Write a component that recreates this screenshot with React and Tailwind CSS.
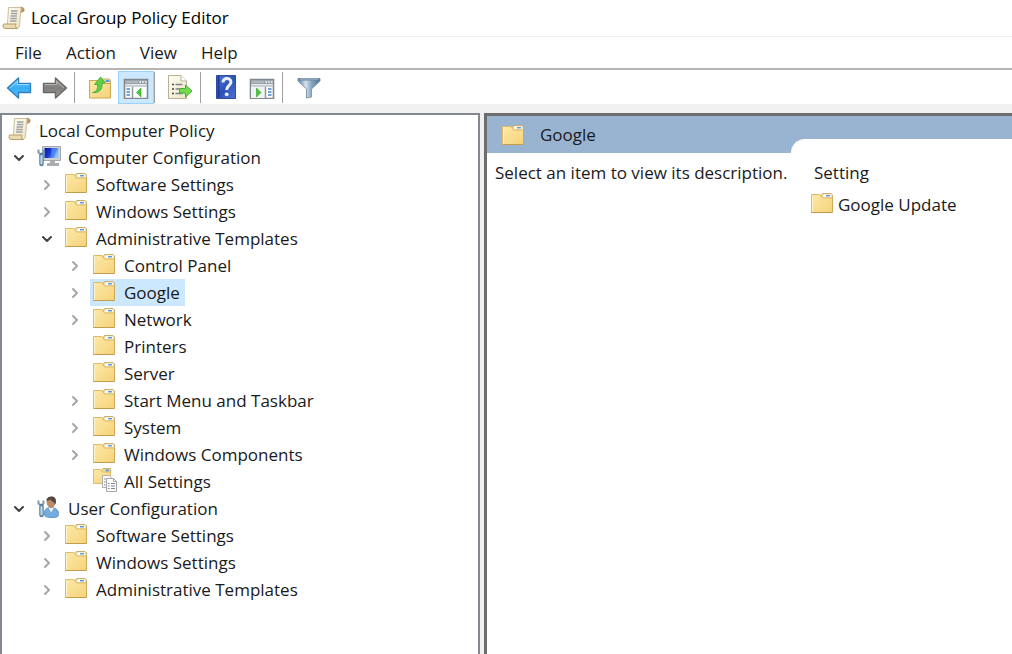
import { useState } from "react";
import { ChevronDown, ChevronRight } from "lucide-react";

const TREE = [
  {
    id: "computer",
    name: "Computer Configuration",
    icon: "computer",
    children: [
      { id: "c-software", name: "Software Settings", children: [] },
      { id: "c-windows", name: "Windows Settings", children: [] },
      {
        id: "c-admin",
        name: "Administrative Templates",
        children: [
          { id: "control-panel", name: "Control Panel", children: [] },
          { id: "google", name: "Google", children: [] },
          { id: "network", name: "Network", children: [] },
          { id: "printers", name: "Printers" },
          { id: "server", name: "Server" },
          { id: "start-menu", name: "Start Menu and Taskbar", children: [] },
          { id: "system", name: "System", children: [] },
          { id: "components", name: "Windows Components", children: [] },
          { id: "all", name: "All Settings", icon: "all" },
        ],
      },
    ],
  },
  {
    id: "user",
    name: "User Configuration",
    icon: "user",
    children: [
      { id: "u-software", name: "Software Settings", children: [] },
      { id: "u-windows", name: "Windows Settings", children: [] },
      { id: "u-admin", name: "Administrative Templates", children: [] },
    ],
  },
];

// gradients shared by all the icons
function IconDefs() {
  return (
    <svg width="0" height="0" className="absolute" aria-hidden="true">
      <defs>
        <linearGradient id="g-folder" x1="0" y1="0" x2="1" y2="1">
          <stop offset="0" stopColor="#fde9a8" />
          <stop offset="1" stopColor="#f5d27a" />
        </linearGradient>
        <linearGradient id="g-blue" x1="0" y1="0" x2="0" y2="1">
          <stop offset="0" stopColor="#7fd0fb" />
          <stop offset="0.5" stopColor="#35adf3" />
          <stop offset="1" stopColor="#5cc5fa" />
        </linearGradient>
        <linearGradient id="g-gray" x1="0" y1="0" x2="0" y2="1">
          <stop offset="0" stopColor="#aaa6a4" />
          <stop offset="0.5" stopColor="#807c7a" />
          <stop offset="1" stopColor="#a19d9b" />
        </linearGradient>
        <linearGradient id="g-help" x1="0" y1="0" x2="1" y2="1">
          <stop offset="0" stopColor="#5479d4" />
          <stop offset="0.5" stopColor="#2c52ba" />
          <stop offset="1" stopColor="#4e74d2" />
        </linearGradient>
        <linearGradient id="g-funnel" x1="0" y1="0" x2="1" y2="0">
          <stop offset="0" stopColor="#5d7f9f" />
          <stop offset="0.35" stopColor="#d3e2ee" />
          <stop offset="0.6" stopColor="#8ba8c1" />
          <stop offset="1" stopColor="#4c6f90" />
        </linearGradient>
        <linearGradient id="g-screen" x1="0" y1="0" x2="1" y2="0.4">
          <stop offset="0" stopColor="#0716a8" />
          <stop offset="0.5" stopColor="#1539d3" />
          <stop offset="1" stopColor="#8fc4f8" />
        </linearGradient>
        <linearGradient id="g-paper" x1="0" y1="0" x2="1" y2="1">
          <stop offset="0" stopColor="#fffef3" />
          <stop offset="1" stopColor="#ece3c3" />
        </linearGradient>
      </defs>
    </svg>
  );
}

function FolderIcon() {
  return (
    <svg width="22" height="22" viewBox="0 0 22 22" aria-hidden="true">
      <path d="M10 4 11.500 1.500h8.500l1.500 1.500v5H10z" fill="#f3dfa8" stroke="#c9ad6c" />
      <path d="M12.500 2.500h7.500v2.500h-7.500z" fill="#fff" />
      <path d="M15 3h4v1.500h-4z" fill="#5f9bdc" />
      <path d="M.5 2.500h8.500l2.500 3.500h10v14.500H.5z" fill="url(#g-folder)" stroke="#dcbb69" />
      <path d="M1.500 3.500v16" stroke="#fff3c8" />
      <path d="M.5 20.500h21" stroke="#c39c4c" />
      <path d="M21.500 6v14" stroke="#cfa957" />
    </svg>
  );
}

function ScrollIcon() {
  return (
    <svg width="24" height="24" viewBox="0 0 24 24" aria-hidden="true">
      <path d="M17.500 1.500c3.500-1 5 1 4.500 3.500L19.500 6.500z" fill="#b99a62" stroke="#9c8555" strokeWidth=".7" />
      <path
        d="M6.500 1.500H18c1.500 0 1 2 .8 3L17.500 19c-.2 2-1 3.500-3 3.500H4L5.500 18z"
        fill="url(#g-paper)"
        stroke="#cdbf98"
      />
      <path
        d="M1.500 18h12.500c-1 2 0 4.500 1.500 4.500H3c-2 0-2.500-2.500-1.500-4.500z"
        fill="#eadcb2"
        stroke="#b89f6b"
      />
      <path d="M9 5h6.500M8.800 7.500h6.500M8.500 10H15M8.200 12.500h6.600M8 15h6.500" stroke="#9fa2a6" strokeWidth="1.300" />
    </svg>
  );
}

function Wrench() {
  return (
    <>
      <path d="M1.500 4.500v3L4 9.500l2.500-2v-3" fill="none" stroke="#7d99b0" strokeWidth="2" />
      <path d="M4.500 10v9" stroke="#587e9b" strokeWidth="4.500" strokeLinecap="round" />
      <path d="M4.500 11v7.500" stroke="#b6daf0" strokeWidth="2.200" strokeLinecap="round" />
    </>
  );
}

function ComputerIcon() {
  return (
    <svg width="24" height="22" viewBox="0 0 24 22" aria-hidden="true">
      <path d="M13 15h5v3h4v3H10v-3h3z" fill="#a9adb0" />
      <path d="M5.500 1.500h18v14h-18z" fill="#cfd1d3" stroke="#a3a8ad" />
      <path d="M7.500 3h14v10h-14z" fill="url(#g-screen)" />
      <path d="M14 3h5l-2 10h-2z" fill="#4f8bee" opacity=".7" />
      <Wrench />
    </svg>
  );
}

function UserIcon() {
  return (
    <svg width="24" height="22" viewBox="0 0 24 22" aria-hidden="true">
      <path d="M7.500 19c-1-5 2-7.500 6-7.500s8 2 8 6-2 4-7 4-6.500-1-7-2.500z" fill="#75abdf" stroke="#5c96cd" />
      <path d="M11.500 11.500 14 16.500l3-5z" fill="#eef6fc" />
      <path d="M9.500 5c0-3 2-4 4.500-4s5 2 4.500 5.500-2 5.500-4 5.500-5-2-5-7z" fill="#bc8a68" />
      <path d="M9.500 4.500C9.500 2 12 .5 14.500.5 18 .5 20 3 18.500 8.500L16.500 6c-1.500-.5-2.500-1.500-3-2.500-1 1-2.500 1.300-4 1z" fill="#54473f" />
      <Wrench />
    </svg>
  );
}

function AllSettingsIcon() {
  return (
    <svg width="24" height="24" viewBox="0 0 24 24" aria-hidden="true">
      <path d="M8.500 3 10 .5h7.500v5h-9z" fill="#f3dc9c" stroke="#c9ad6c" />
      <path d="M12.500 1.500H16V3.500h-3.500z" fill="#5f9bdc" />
      <path d="M.5 1.500h7L9.500 4h8v11.500H.5z" fill="url(#g-folder)" stroke="#dcbb69" />
      <path d="M9.500 7.500h7l2 2v10h-9z" fill="#fafafa" stroke="#b0b0b0" />
      <path d="M13.500 10.500h7l3 3v10h-10z" fill="#fff" stroke="#a5a5a5" />
      <path d="M20.500 10.500v3h3" fill="none" stroke="#a5a5a5" />
      <path d="M11 11h1.500M11 14h1.500M11 17h1.500" stroke="#789" />
      <path d="M15 15.500h1.500M15 18h1.500M15 20.500h1.500M18 15.500h4M18 18h4M18 20.500h4" stroke="#778594" />
    </svg>
  );
}

function ArrowIcon({ forward }) {
  return forward ? (
    <svg width="26" height="24" viewBox="0 -1 26 24" aria-hidden="true">
      <path
        d="M24.500 12 13.500 2v5.500h-12v9h12V22z"
        fill="url(#g-gray)"
        stroke="#696664"
        strokeWidth="1.400"
        strokeLinejoin="round"
      />
      <path d="M2.500 8.500h12V5l7.500 7" fill="none" stroke="#bebbb9" strokeWidth=".8" />
    </svg>
  ) : (
    <svg width="26" height="24" viewBox="0 -1 26 24" aria-hidden="true">
      <path
        d="M1.500 12 12.500 2v5.500h12v9h-12V22z"
        fill="url(#g-blue)"
        stroke="#2f7fc0"
        strokeWidth="1.400"
        strokeLinejoin="round"
      />
      <path d="M23.500 8.500h-12V5L4 12" fill="none" stroke="#a9e1ff" strokeWidth=".8" />
    </svg>
  );
}

function UpFolderIcon() {
  return (
    <svg width="24" height="24" viewBox="0 -1 24 24" aria-hidden="true">
      <path d="M12 5.500 13.500 3h8l1 1.500V8H12z" fill="#f3dc9c" stroke="#c9ad6c" />
      <path d="M17.500 4h4v2h-4z" fill="#5f9bdc" />
      <path d="M1.500 4.500H10L12 7.500h10.500v14.500h-21z" fill="url(#g-folder)" stroke="#cba653" />
      <path
        d="M4.500 16.500c4-.5 5.500-3.500 5-8H6.500L12.500 1l4.500 5.500-3 .8c1 6-3 10-9.500 9.200z"
        fill="#5fd044"
        stroke="#46ab35"
        strokeWidth=".9"
        strokeLinejoin="round"
      />
    </svg>
  );
}

function WindowIcon({ flipped }) {
  return (
    <svg width="26" height="24" viewBox="0 -2 26 24" aria-hidden="true">
      <path d="M1.500 2.500h23v19h-23z" fill="#fff" stroke="#808890" strokeWidth="1.600" />
      <path d="M2 3h22v4H2z" fill="#9ba3ab" />
      <path d="M3 5h12" stroke="#c6ccd2" />
      <path d="M16.500 5H18M19.200 5h1.500M22 5h1.500" stroke="#fff" strokeWidth="1.500" />
      <path d="M2 7.500h22V10H2z" fill="#c9ced3" />
      {flipped ? (
        <>
          <path d="M2 10h14v11H2z" fill="#f1f2f2" />
          <path d="M16.500 10v11" stroke="#9098a0" strokeWidth="1.500" />
          <path d="M19 12h3.500M19 15h3.500M19 18h3.500" stroke="#4685c8" strokeWidth="1.600" />
          <path d="m7.500 11 4.500 4.500L7.500 20z" fill="#4cc93a" stroke="#2b9f1f" strokeWidth=".6" />
        </>
      ) : (
        <>
          <path d="M9.500 10v11" stroke="#9098a0" strokeWidth="1.500" />
          <path d="M3.500 12H7M3.500 15H7M3.500 18H7" stroke="#4685c8" strokeWidth="1.600" />
          <path d="M18 11l-4.500 4.500L18 20z" fill="#4cc93a" stroke="#2b9f1f" strokeWidth=".6" />
        </>
      )}
    </svg>
  );
}

function ExportIcon() {
  return (
    <svg width="26" height="26" viewBox="0 0 26 26" aria-hidden="true">
      <path d="M1.500 1.500H14l5.500 5.500v17.500h-18z" fill="url(#g-paper)" stroke="#b9b298" />
      <path d="M14 1.500V7h5.500" fill="#fff" stroke="#b9b298" />
      <path d="M5 10.500h2M5 15h2M5 19.500h2" stroke="#3e4648" strokeWidth="1.600" />
      <path d="M8.500 10.500h7M8.500 15h4M8.500 19.500h7" stroke="#7b8488" strokeWidth="1.400" />
      <path
        d="M12.500 14.500h6v-3.500l6.500 6-6.500 6v-4h-6z"
        fill="#74dc50"
        stroke="#3fb32d"
        strokeLinejoin="round"
      />
    </svg>
  );
}

function HelpIcon() {
  return (
    <svg width="22" height="26" viewBox="0 0 22 26" aria-hidden="true">
      <path d="M1.500 1.500h19v23h-19z" fill="url(#g-help)" stroke="#2f4c9e" />
      <path d="M3.500 2v22" stroke="#1f3c99" strokeWidth="2" />
      <path
        d="M8 8.500c0-5.500 8-5 8-.5 0 3.500-4.300 3.500-4.300 8"
        fill="none"
        stroke="#e9effb"
        strokeWidth="3"
      />
      <circle cx="11.700" cy="20.300" r="1.900" fill="#e9effb" />
    </svg>
  );
}

function FilterIcon() {
  return (
    <svg width="26" height="26" viewBox="0 -1 26 26" aria-hidden="true">
      <path
        d="M2 3.500h22V6L15.500 14v8l-5 1V14L2 6z"
        fill="url(#g-funnel)"
        stroke="#7f99b0"
        strokeLinejoin="round"
      />
      <path d="M2 3h22v2.500H2z" fill="#6b879f" />
      <path d="M4 4h18" stroke="#a9bfd2" />
    </svg>
  );
}

function NodeIcon({ type }) {
  if (type === "computer") return <ComputerIcon />;
  if (type === "user") return <UserIcon />;
  if (type === "all") return <AllSettingsIcon />;
  return <FolderIcon />;
}

function TreeNode({ node, open, toggle, selected, select }) {
  const isOpen = open.includes(node.id);

  return (
    <li>
      <div className="flex h-[27px] items-center">
        <div className="flex w-[30px] shrink-0 justify-center">
          {node.children && (
            <button
              type="button"
              aria-label={`${isOpen ? "Collapse" : "Expand"} ${node.name}`}
              onClick={() => toggle(node.id)}
            >
              {isOpen ? (
                <ChevronDown size={16} strokeWidth={3} className="text-[#404040]" />
              ) : (
                <ChevronRight size={16} strokeWidth={3} className="text-[#a6a6a6]" />
              )}
            </button>
          )}
        </div>
        <button
          type="button"
          onClick={() => select(node.id)}
          className={`flex h-full items-center px-[3px] pr-[5px] whitespace-nowrap ${
            selected === node.id ? "bg-[#cce8ff]" : ""
          }`}
        >
          <span className="flex w-[31px] shrink-0 pb-[3px]">
            <NodeIcon type={node.icon} />
          </span>
          {node.name}
        </button>
      </div>
      {isOpen && node.children.length > 0 && (
        <ul className="pl-[28px]">
          {node.children.map((child) => (
            <TreeNode
              key={child.id}
              node={child}
              open={open}
              toggle={toggle}
              selected={selected}
              select={select}
            />
          ))}
        </ul>
      )}
    </li>
  );
}

function ToolButton({ label, active, children }) {
  return (
    <button
      type="button"
      aria-label={label}
      className={`flex h-[33px] w-9 items-center justify-center border ${
        active ? "border-[#99d1ff] bg-[#cce8ff]" : "border-transparent"
      }`}
    >
      {children}
    </button>
  );
}

function Separator() {
  return <div className="h-[31px] w-px bg-[#a0a0a0]" />;
}

export default function App() {
  const [open, setOpen] = useState(["computer", "c-admin", "user"]);
  const [selected, setSelected] = useState("google");

  const toggle = (id) =>
    setOpen((prev) => (prev.includes(id) ? prev.filter((x) => x !== id) : [...prev, id]));

  return (
    <div className="flex h-screen flex-col overflow-hidden bg-[#f0f0f0] font-['Open_Sans',sans-serif] text-[17px] leading-6 text-[#1a1a1a]">
      <IconDefs />

      <header className="flex h-9 shrink-0 items-center gap-[5px] bg-white pl-[2px] text-black">
        <ScrollIcon />
        <h1>Local Group Policy Editor</h1>
      </header>

      <nav className="flex h-[34px] shrink-0 items-center gap-6 border-t border-b-2 border-t-[#f0f0f0] border-b-[#b4b4b4] bg-white pl-[15px]">
        <button type="button">File</button>
        <button type="button">Action</button>
        <button type="button">View</button>
        <button type="button">Help</button>
      </nav>

      <div className="flex h-[34px] shrink-0 items-center bg-white pl-px">
        <div className="flex items-center pr-px">
          <ToolButton label="Back">
            <ArrowIcon />
          </ToolButton>
          <ToolButton label="Forward">
            <ArrowIcon forward />
          </ToolButton>
        </div>
        <Separator />
        <div className="flex items-center pl-[7px]">
          <ToolButton label="Up one level">
            <UpFolderIcon />
          </ToolButton>
          <ToolButton label="Show or hide console tree" active>
            <WindowIcon />
          </ToolButton>
        </div>
        <Separator />
        <div className="flex items-center pr-[2px] pl-[7px]">
          <ToolButton label="Export list">
            <ExportIcon />
          </ToolButton>
        </div>
        <Separator />
        <div className="flex items-center pr-[2px] pl-[7px]">
          <ToolButton label="Help topics">
            <HelpIcon />
          </ToolButton>
          <ToolButton label="Show or hide action pane">
            <WindowIcon flipped />
          </ToolButton>
        </div>
        <Separator />
        <div className="flex items-center pl-[8px]">
          <ToolButton label="Filter">
            <FilterIcon />
          </ToolButton>
        </div>
      </div>

      <div className="flex min-h-0 flex-1 gap-1 pt-[9px]">
        <aside className="w-[480px] shrink-0 overflow-hidden border-2 border-b-0 border-[#828790] bg-white pt-[2px] pl-[2px]">
          <div className="flex h-[27px] items-center pl-1">
            <span className="flex w-[31px] pb-[3px]">
              <ScrollIcon />
            </span>
            Local Computer Policy
          </div>
          <ul>
            {TREE.map((node) => (
              <TreeNode
                key={node.id}
                node={node}
                open={open}
                toggle={toggle}
                selected={selected}
                select={setSelected}
              />
            ))}
          </ul>
        </aside>

        <main className="flex min-w-0 flex-1 flex-col border-t-[3px] border-l-[3px] border-[#6d6d6d] bg-white">
          <div className="flex h-[37px] shrink-0 bg-[#99b4d1]">
            <div className="flex w-[304px] shrink-0 items-center pl-[15px]">
              <span className="flex w-[38px]">
                <FolderIcon />
              </span>
              <h2>Google</h2>
            </div>
            <div className="mt-[23px] flex-1 rounded-tl-[14px] bg-white" />
          </div>
          <div className="flex pt-2">
            <p className="w-[324px] shrink-0 pl-2 whitespace-nowrap">
              Select an item to view its description.
            </p>
            <div>
              <h3 className="pl-[3px]">Setting</h3>
              <ul className="pt-[7px]">
                <li>
                  <button type="button" className="flex items-center gap-[5px]">
                    <span className="flex pb-[3px]">
                      <FolderIcon />
                    </span>
                    Google Update
                  </button>
                </li>
              </ul>
            </div>
          </div>
        </main>
      </div>
    </div>
  );
}
